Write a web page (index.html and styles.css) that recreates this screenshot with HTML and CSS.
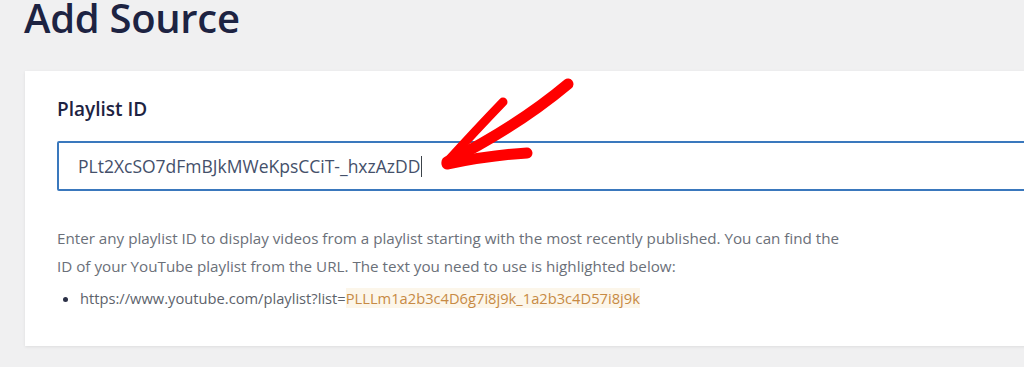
FILE: index.html
```html
<!DOCTYPE html>
<html>
<head>
  <link rel="stylesheet" href="styles.css">
</head>
<body>
  <div class="page">
    <h1 class="page-title">Add Source</h1>

    <!-- Source settings card -->
    <div class="card">
      <label class="field-label" for="playlist">Playlist ID</label>
      <div class="field-input">
        <span class="field-value">PLt2XcSO7dFmBJkMWeKpsCCiT-_hxzAzDD</span><span class="caret"></span>
      </div>

      <p class="help">Enter any playlist ID to display videos from a playlist starting with the most recently published. You can find the ID of your YouTube playlist from the URL. The text you need to use is highlighted below:</p>
      <ul class="help-list">
        <li>https://www.youtube.com/playlist?list=<span class="mark">PLLLm1a2b3c4D6g7i8j9k_1a2b3c4D57i8j9k</span></li>
      </ul>
    </div>

    <!-- hand drawn pointer -->
    <svg class="arrow" width="1024" height="367" viewBox="0 0 1024 367">
      <g fill="none" stroke="#ff0000" stroke-linecap="round" stroke-linejoin="round">
        <path d="M568 86 Q518 128 447 164" stroke-width="11"/>
        <path d="M503 104 Q476 132 447 164" stroke-width="9"/>
        <path d="M527 155 Q492 157 447 166" stroke-width="11"/>
      </g>
    </svg>
  </div>
</body>
</html>
```

FILE: styles.css
```css
* {
  margin: 0;
  padding: 0;
  box-sizing: border-box;
}

body {
  background: #f0f0f1;
  font-family: "Open Sans", "Noto Sans", sans-serif;
  overflow: hidden;
}

.page {
  position: relative;
  width: 1024px;
  height: 367px;
  padding: 0 0 0 24px;
}

.page-title {
  font-size: 40px;
  font-weight: 600;
  color: #1d2342;
  line-height: 40px;
  margin-top: -2px;
  letter-spacing: -0.3px;
}

/* Card */
.card {
  margin-top: 33px;
  margin-left: 1px;
  width: 1100px;
  height: 275px;
  background: #fff;
  box-shadow: 0 1px 3px rgba(0, 0, 0, 0.08);
  padding: 26px 32px 0 32px;
}

.field-label {
  display: block;
  font-size: 19px;
  font-weight: 600;
  color: #1d2342;
  line-height: 24px;
}

.field-input {
  margin-top: 20px;
  height: 50px;
  border: 2px solid #3a78bd;
  border-radius: 2px;
  display: flex;
  align-items: center;
  padding-left: 19px;
}

.field-value {
  font-size: 17.5px;
  color: #44506a;
}

.caret {
  display: inline-block;
  width: 1px;
  height: 21px;
  background: #3c434a;
  margin-left: 1px;
}

.help {
  margin-top: 33px;
  max-width: 790px;
  font-size: 15.2px;
  line-height: 28px;
  color: #6b7079;
}

.help-list {
  margin-top: 7px;
  padding-left: 23px;
  font-size: 14.7px;
  line-height: 22px;
  color: #5d636c;
}

.help-list li::marker {
  color: #2c3147;
}

.mark {
  background: #fcf6ea;
  color: #c78a44;
}

.arrow {
  position: absolute;
  left: 0;
  top: 0;
  pointer-events: none;
}
```
